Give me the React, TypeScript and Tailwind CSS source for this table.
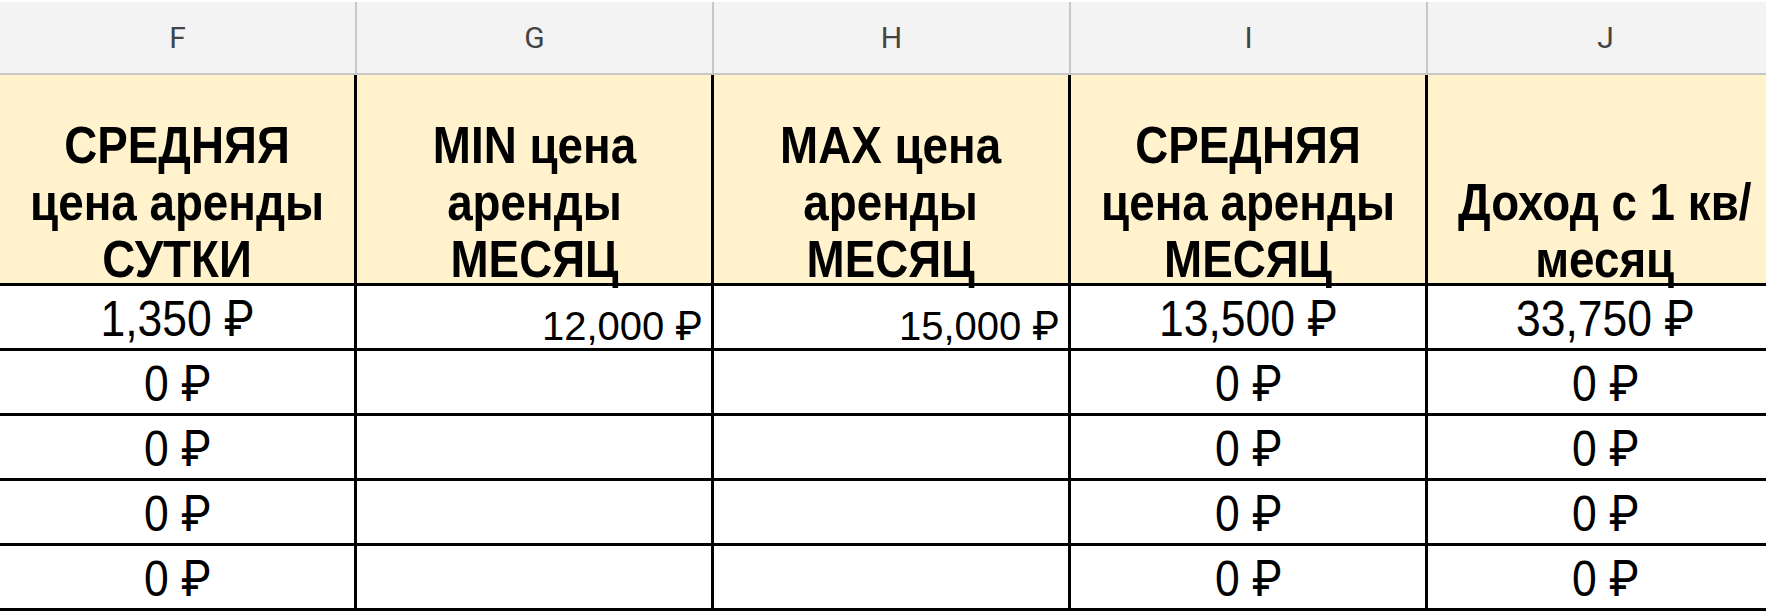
const columns = ["F", "G", "H", "I", "J"];

const headers: string[][] = [
  ["СРЕДНЯЯ", "цена аренды", "СУТКИ"],
  ["MIN цена", "аренды", "МЕСЯЦ"],
  ["MAX цена", "аренды", "МЕСЯЦ"],
  ["СРЕДНЯЯ", "цена аренды", "МЕСЯЦ"],
  ["Доход с 1 кв/", "месяц"],
];

type Cell = { value: string; align: "center" | "right" } | null;

const rows: Cell[][] = [
  [
    { value: "1,350 ₽", align: "center" },
    { value: "12,000 ₽", align: "right" },
    { value: "15,000 ₽", align: "right" },
    { value: "13,500 ₽", align: "center" },
    { value: "33,750 ₽", align: "center" },
  ],
  ...Array.from({ length: 4 }, () => [
    { value: "0 ₽", align: "center" as const },
    null,
    null,
    { value: "0 ₽", align: "center" as const },
    { value: "0 ₽", align: "center" as const },
  ]),
];

export default function App() {
  return (
    <div className="w-[1766px] h-[612px] overflow-hidden bg-white font-['Liberation_Sans',Roboto,Arial,sans-serif] text-black">
      <div className="h-[2px] bg-white" />

      {/* column letters */}
      <div className="flex h-[73px] border-b-2 border-[#c7c7c7] bg-[#f3f3f3] font-['Roboto',sans-serif]">
        {columns.map((c) => (
          <div
            key={c}
            className="w-[357px] shrink-0 flex items-center justify-center border-r-2 border-[#c7c7c7] text-[30px] leading-none text-[#444]"
          >
            {c}
          </div>
        ))}
      </div>

      {/* header row */}
      <div className="flex h-[211px] border-b-[3px] border-black bg-[#fff2cc]">
        {headers.map((lines, i) => (
          <div
            key={i}
            className="w-[357px] shrink-0 flex flex-col justify-end items-center border-r-[3px] border-black"
          >
            <div className="-mb-[5px] scale-x-[0.88] text-center text-[52px] leading-[57px] font-bold whitespace-nowrap">
              {lines.map((l, j) => (
                <div key={j}>{l}</div>
              ))}
            </div>
          </div>
        ))}
      </div>

      {/* data rows */}
      {rows.map((row, r) => (
        <div key={r} className="flex h-[65px] border-b-[3px] border-black">
          {row.map((cell, c) => (
            <div
              key={c}
              className={
                cell?.align === "right"
                  ? "w-[357px] shrink-0 flex items-end justify-end pr-[9px] pb-[2px] border-r-[3px] border-black text-[40px] leading-none whitespace-nowrap"
                  : "w-[357px] shrink-0 flex items-end justify-center pb-[4px] border-r-[3px] border-black text-[50px] leading-none whitespace-nowrap"
              }
            >
              {cell && (
                <span className={cell.align === "right" ? "inline-block" : "inline-block scale-x-[0.89]"}>
                  {cell.value}
                </span>
              )}
            </div>
          ))}
        </div>
      ))}
    </div>
  );
}
